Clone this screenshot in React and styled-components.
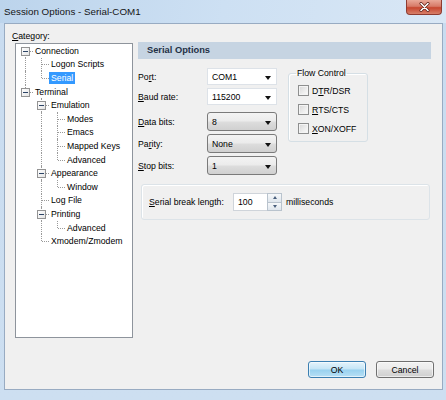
import React from "react";
import styled, { createGlobalStyle } from "styled-components";

const GlobalStyle = createGlobalStyle`
  html, body {
    margin: 0;
    padding: 0;
  }
  body {
    font-family: "Liberation Sans", Arial, sans-serif;
    font-size: 8.7px;
    color: #000;
  }
`;

const Window = styled.div`
  width: 446px;
  height: 400px;
  display: flex;
  flex-direction: column;
  overflow: hidden;
  background: linear-gradient(180deg, #b8d0e9 0px, #c9dcf0 22px, #cddff1 100%);
`;

const TitleBar = styled.div`
  height: 23px;
  flex: none;
  display: flex;
  align-items: center;
  padding-left: 4px;
  background: linear-gradient(100deg, #bcd4ec 0%, #cde0f3 50%, #d9e7f5 100%);
`;

const Title = styled.span`
  font-size: 9.8px;
  color: #151515;
`;

const CloseButton = styled.div`
  align-self: flex-start;
  margin-left: auto;
  margin-right: 4px;
  width: 36px;
  height: 15px;
  box-sizing: border-box;
  border: 1px solid #8e3b30;
  border-top: none;
  border-radius: 0 0 4px 4px;
  background: linear-gradient(180deg, #e9a898 0%, #d77a68 45%, #c7462f 55%, #d7806a 100%);
  display: flex;
  align-items: center;
  justify-content: center;
`;

const Client = styled.div`
  flex: 1;
  margin: 0 3px 10px 4px;
  border: 1px solid #98abc2;
  background: #f0f0f0;
  display: flex;
  flex-direction: column;
`;

const Body = styled.div`
  flex: 1;
  display: flex;
  padding: 7px 11px 0 7px;
`;

const LeftColumn = styled.div`
  width: 121px;
  flex: none;
  display: flex;
  flex-direction: column;
`;

const CategoryLabel = styled.div`
  line-height: 11px;
  height: 11px;
`;

const Tree = styled.div`
  margin: 1px 0 0 3px;
  width: 118px;
  height: 295px;
  box-sizing: border-box;
  border: 1px solid #8e949c;
  background: #fff;
  padding-left: 1px;
`;

const TreeRow = styled.div`
  height: 13.6px;
  display: flex;
  align-items: center;
`;

const Guide = styled.span`
  position: relative;
  flex: none;
  width: 16px;
  height: 100%;

  &::before {
    content: "";
    position: absolute;
    left: 8px;
    border-left: 1px dotted #9a9a9a;
    ${({ $v }) =>
      $v === "none"
        ? "display: none;"
        : $v === "top"
        ? "top: 0; height: 50%;"
        : $v === "bottom"
        ? "top: 50%; bottom: 0;"
        : "top: 0; bottom: 0;"}
  }

  &::after {
    content: "";
    position: absolute;
    left: 9px;
    right: 0;
    top: 50%;
    border-top: 1px dotted #9a9a9a;
    display: ${({ $h }) => ($h ? "block" : "none")};
  }
`;

const Expander = styled.span`
  position: absolute;
  z-index: 1;
  left: 4px;
  top: calc(50% - 4px);
  width: 9px;
  height: 9px;
  box-sizing: border-box;
  border: 1px solid #939393;
  background: linear-gradient(135deg, #ffffff 0%, #e4e4e4 100%);

  &::after {
    content: "";
    position: absolute;
    left: 1px;
    top: 3px;
    width: 5px;
    height: 1px;
    background: #2c4466;
  }
`;

const NodeLabel = styled.span`
  padding: 0 2px;
  height: 12px;
  line-height: 12px;
  white-space: nowrap;
  background: ${({ $selected }) => ($selected ? "#3399ff" : "transparent")};
  color: ${({ $selected }) => ($selected ? "#fff" : "#000")};
`;

const RightColumn = styled.div`
  margin-left: 5px;
  width: 293px;
  flex: none;
  padding-top: 11px;
  display: flex;
  flex-direction: column;
`;

const Header = styled.div`
  height: 17px;
  line-height: 17px;
  padding-left: 9px;
  background: #c6d4e2;
  color: #1f3045;
  font-weight: bold;
  font-size: 9.3px;
`;

const Form = styled.div`
  margin-top: 9px;
  display: flex;
  align-items: flex-start;
`;

const Fields = styled.div`
  width: 139px;
  display: flex;
  flex-direction: column;
  gap: 3px;
`;

const FieldRow = styled.div`
  display: flex;
  align-items: center;
  margin-top: ${({ $mt }) => $mt || 0}px;
`;

const FieldLabel = styled.span`
  width: 69px;
  flex: none;
`;

const Combo = styled.div`
  position: relative;
  width: 70px;
  height: ${({ $flat }) => ($flat ? 17 : 19)}px;
  box-sizing: border-box;
  padding-left: 4px;
  display: flex;
  align-items: center;
  border: 1px solid ${({ $flat }) => ($flat ? "#dde2e8" : "#7a7a7a")};
  border-radius: ${({ $flat }) => ($flat ? 0 : 3)}px;
  background: ${({ $flat }) =>
    $flat
      ? "#fff"
      : "linear-gradient(180deg, #f3f3f3 0%, #ebebeb 48%, #dddddd 52%, #d0d0d0 100%)"};

  &::after {
    content: "";
    position: absolute;
    right: 5px;
    top: calc(50% - 1px);
    border-left: 3.5px solid transparent;
    border-right: 3.5px solid transparent;
    border-top: 4px solid #111;
  }
`;

const FlowGroup = styled.fieldset`
  margin: 0 0 0 11px;
  padding: 2px 0 3px 9px;
  width: 80px;
  height: 74px;
  box-sizing: border-box;
  border: 1px solid #d5dfe5;
  border-radius: 3px;
  box-shadow: inset 1px 1px 0 #fff;
  display: flex;
  flex-direction: column;
  justify-content: space-between;
`;

const Legend = styled.legend`
  padding: 0 1px;
  margin-left: -2px;
  line-height: 11px;
`;

const CheckRow = styled.label`
  height: 19px;
  display: flex;
  align-items: center;
  gap: 3px;
`;

const CheckBox = styled.span`
  width: 11px;
  height: 11px;
  box-sizing: border-box;
  border: 1px solid #8e8f8f;
  background: linear-gradient(135deg, #d6d6d6 0%, #eeeeee 60%, #fbfbfb 100%);
  box-shadow: inset 0 0 0 1px #f4f4f4;
`;

const BreakGroup = styled.div`
  margin: 9px 1px 0 3px;
  height: 36px;
  box-sizing: border-box;
  border: 1px solid #dce3e8;
  border-radius: 3px;
  box-shadow: inset 1px 1px 0 #fff;
  padding-left: 7px;
  display: flex;
  align-items: center;
`;

const BreakLabel = styled.span`
  width: 84px;
  flex: none;
`;

const SpinInput = styled.div`
  width: 34px;
  height: 18px;
  box-sizing: border-box;
  border: 1px solid #cfd4da;
  border-right: none;
  background: #fff;
  padding-left: 4px;
  display: flex;
  align-items: center;
`;

const SpinButtons = styled.div`
  width: 15px;
  height: 18px;
  display: flex;
  flex-direction: column;
`;

const SpinButton = styled.span`
  flex: 1;
  box-sizing: border-box;
  border: 1px solid #b9c3cd;
  border-top-width: ${({ $down }) => ($down ? 0 : 1)}px;
  background: linear-gradient(180deg, #f6f8fa 0%, #dfe6ed 100%);
  display: flex;
  align-items: center;
  justify-content: center;

  &::after {
    content: "";
    border-left: 2.5px solid transparent;
    border-right: 2.5px solid transparent;
    ${({ $down }) =>
      $down ? "border-top: 3px solid #4a5f7c;" : "border-bottom: 3px solid #4a5f7c;"}
  }
`;

const Unit = styled.span`
  margin-left: 4px;
`;

const Footer = styled.div`
  display: flex;
  justify-content: flex-end;
  gap: 10px;
  padding: 0 8px 11px 0;
`;

const Button = styled.div`
  width: 58px;
  height: 17px;
  box-sizing: border-box;
  border-radius: 3px;
  display: flex;
  align-items: center;
  justify-content: center;
  border: 1px solid ${({ $primary }) => ($primary ? "#3c7fb1" : "#707070")};
  background: ${({ $primary }) =>
    $primary
      ? "linear-gradient(180deg, #e5f4fc 0%, #c4e5f6 48%, #98d1ef 52%, #b7e0f5 100%)"
      : "linear-gradient(180deg, #f2f2f2 0%, #ebebeb 48%, #dddddd 52%, #cfcfcf 100%)"};
  box-shadow: inset 0 0 0 1px rgba(255, 255, 255, 0.6);
`;

const tree = [
  {
    label: "Connection",
    children: [{ label: "Logon Scripts" }, { label: "Serial", selected: true }],
  },
  {
    label: "Terminal",
    children: [
      {
        label: "Emulation",
        children: [
          { label: "Modes" },
          { label: "Emacs" },
          { label: "Mapped Keys" },
          { label: "Advanced" },
        ],
      },
      { label: "Appearance", children: [{ label: "Window" }] },
      { label: "Log File" },
      { label: "Printing", children: [{ label: "Advanced" }] },
      { label: "Xmodem/Zmodem" },
    ],
  },
];

const flatten = (nodes, level = 0, trail = []) =>
  nodes.flatMap((node, i) => {
    const last = i === nodes.length - 1;
    const row = {
      ...node,
      level,
      trail,
      last,
      first: level === 0 && i === 0,
      hasChildren: !!node.children,
    };
    return [row, ...(node.children ? flatten(node.children, level + 1, [...trail, !last]) : [])];
  });

const rows = flatten(tree);

const ownLine = (row) => {
  if (row.first) return row.last ? "none" : "bottom";
  return row.last ? "top" : "full";
};

const Key = ({ children }) => <u>{children}</u>;

const CloseIcon = () => (
  <svg width="11" height="10" viewBox="0 0 11 10">
    <path d="M2 1.5 L9 8.5 M9 1.5 L2 8.5" stroke="#5a1e16" strokeWidth="3" strokeLinecap="round" />
    <path d="M2 1.5 L9 8.5 M9 1.5 L2 8.5" stroke="#fff" strokeWidth="1.6" strokeLinecap="round" />
  </svg>
);

const App = () => (
  <>
    <GlobalStyle />
    <Window>
      <TitleBar>
        <Title>Session Options - Serial-COM1</Title>
        <CloseButton>
          <CloseIcon />
        </CloseButton>
      </TitleBar>
      <Client>
        <Body>
          <LeftColumn>
            <CategoryLabel>
              <Key>C</Key>ategory:
            </CategoryLabel>
            <Tree>
              {rows.map((row, idx) => (
                <TreeRow key={idx}>
                  {row.trail.map((more, k) => (
                    <Guide key={k} $v={more ? "full" : "none"} />
                  ))}
                  <Guide $v={ownLine(row)} $h>
                    {row.hasChildren && <Expander />}
                  </Guide>
                  <NodeLabel $selected={row.selected}>{row.label}</NodeLabel>
                </TreeRow>
              ))}
            </Tree>
          </LeftColumn>
          <RightColumn>
            <Header>Serial Options</Header>
            <Form>
              <Fields>
                <FieldRow>
                  <FieldLabel>
                    Po<Key>r</Key>t:
                  </FieldLabel>
                  <Combo $flat>COM1</Combo>
                </FieldRow>
                <FieldRow>
                  <FieldLabel>
                    <Key>B</Key>aud rate:
                  </FieldLabel>
                  <Combo $flat>115200</Combo>
                </FieldRow>
                <FieldRow $mt={4}>
                  <FieldLabel>
                    <Key>D</Key>ata bits:
                  </FieldLabel>
                  <Combo>8</Combo>
                </FieldRow>
                <FieldRow>
                  <FieldLabel>
                    Pa<Key>r</Key>ity:
                  </FieldLabel>
                  <Combo>None</Combo>
                </FieldRow>
                <FieldRow>
                  <FieldLabel>
                    <Key>S</Key>top bits:
                  </FieldLabel>
                  <Combo>1</Combo>
                </FieldRow>
              </Fields>
              <FlowGroup>
                <Legend>Flow Control</Legend>
                <CheckRow>
                  <CheckBox />
                  <span>
                    D<Key>T</Key>R/DSR
                  </span>
                </CheckRow>
                <CheckRow>
                  <CheckBox />
                  <span>
                    <Key>R</Key>TS/CTS
                  </span>
                </CheckRow>
                <CheckRow>
                  <CheckBox />
                  <span>
                    <Key>X</Key>ON/XOFF
                  </span>
                </CheckRow>
              </FlowGroup>
            </Form>
            <BreakGroup>
              <BreakLabel>
                <Key>S</Key>erial break length:
              </BreakLabel>
              <SpinInput>100</SpinInput>
              <SpinButtons>
                <SpinButton />
                <SpinButton $down />
              </SpinButtons>
              <Unit>milliseconds</Unit>
            </BreakGroup>
          </RightColumn>
        </Body>
        <Footer>
          <Button $primary>OK</Button>
          <Button>Cancel</Button>
        </Footer>
      </Client>
    </Window>
  </>
);

export default App;
